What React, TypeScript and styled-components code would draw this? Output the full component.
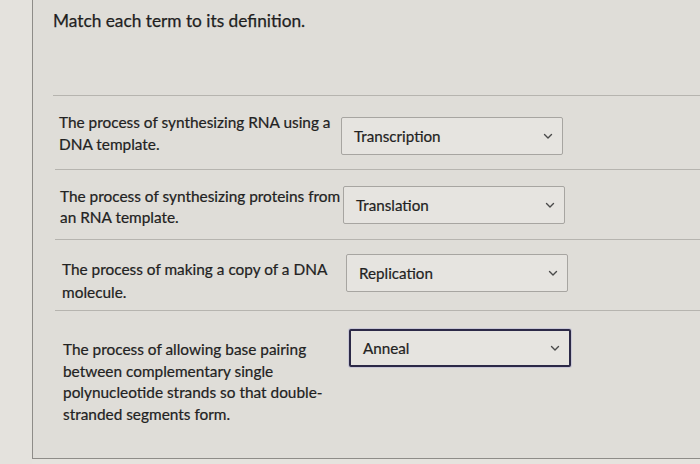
import styled, { createGlobalStyle } from 'styled-components';

const GlobalStyle = createGlobalStyle`
  html, body {
    margin: 0;
    padding: 0;
    background: #e3e1dc;
  }
  body {
    font-family: Lato, "Open Sans", sans-serif;
    color: #262626;
  }
`;

const Page = styled.div`
  display: flex;
  width: 700px;
  height: 464px;
  overflow: hidden;
  background: #e5e3de;
`;

const Gutter = styled.div`
  width: 32px;
  flex-shrink: 0;
  background: #e4e2dd;
`;

const Panel = styled.div`
  flex: 1;
  align-self: flex-start;
  border-left: 1px solid #8e8c88;
  border-bottom: 1px solid #8e8c88;
  background: #dfddd8;
  padding-left: 22px;
`;

const Title = styled.h1`
  margin: 0 0 0 -2px;
  padding: 10px 0 0 0;
  height: 85px;
  font-size: 17.3px;
  font-weight: 400;
  color: #1f1f1f;
  -webkit-text-stroke: 0.25px #1f1f1f;
  border-bottom: 1px solid #b6b4af;
`;

const Row = styled.div<{ $top: number; $bottom: number; $indent: number; $col: number }>`
  display: grid;
  grid-template-columns: ${(p) => p.$col}px 222px;
  align-items: start;
  padding: ${(p) => p.$top}px 0 ${(p) => p.$bottom}px ${(p) => p.$indent}px;
  border-bottom: 1px solid #b6b4af;

  &:last-child {
    border-bottom: none;
  }
`;

const Definition = styled.p<{ $lh: number }>`
  margin: 0;
  font-size: 15.4px;
  line-height: ${(p) => p.$lh}px;
  color: #222;
  -webkit-text-stroke: 0.2px #222;
`;

const Select = styled.div<{ $focused?: boolean; $offset: number }>`
  display: flex;
  align-items: center;
  justify-content: space-between;
  box-sizing: border-box;
  height: 38px;
  margin-top: ${(p) => p.$offset}px;
  padding: 0 9px 0 12px;
  background: #e6e4e0;
  border: ${(p) => (p.$focused ? '2px solid #2c2947' : '1px solid #a7a5a1')};
  border-radius: 2px;
  box-shadow: ${(p) => (p.$focused ? '0 0 0 1px #c9c7d6' : 'none')};
  font-size: 15.2px;
  color: #222;
  -webkit-text-stroke: 0.2px #222;
`;

const Chevron = () => (
  <svg width="10" height="7" viewBox="0 0 10 7" fill="none">
    <path d="M1.5 1.5 L5 5 L8.5 1.5" stroke="#4a4a4a" strokeWidth="1.4" strokeLinecap="round" strokeLinejoin="round" />
  </svg>
);

const rows = [
  {
    text: 'The process of synthesizing RNA using a DNA template.',
    answer: 'Transcription',
    top: 15,
    bottom: 14,
    indent: 4,
    col: 282,
    offset: 6,
    lh: 22,
  },
  {
    text: 'The process of synthesizing proteins from an RNA template.',
    answer: 'Translation',
    top: 16,
    bottom: 11,
    indent: 5,
    col: 283,
    offset: 0,
    lh: 21,
  },
  {
    text: 'The process of making a copy of a DNA molecule.',
    answer: 'Replication',
    top: 18,
    bottom: 6,
    indent: 7,
    col: 284,
    offset: -4,
    lh: 23,
  },
  {
    text: 'The process of allowing base pairing between complementary single polynucleotide strands so that double-stranded segments form.',
    answer: 'Anneal',
    top: 28,
    bottom: 33,
    indent: 8,
    col: 286,
    offset: -10,
    lh: 21.5,
    focused: true,
  },
];

const App = () => {
  return (
    <>
      <GlobalStyle />
      <Page>
        <Gutter />
        <Panel>
          <Title>Match each term to its definition.</Title>
          {rows.map((r) => (
            <Row key={r.answer} $top={r.top} $bottom={r.bottom} $indent={r.indent} $col={r.col}>
              <Definition $lh={r.lh}>{r.text}</Definition>
              <Select $focused={r.focused} $offset={r.offset}>
                <span>{r.answer}</span>
                <Chevron />
              </Select>
            </Row>
          ))}
        </Panel>
      </Page>
    </>
  );
};

export default App;
